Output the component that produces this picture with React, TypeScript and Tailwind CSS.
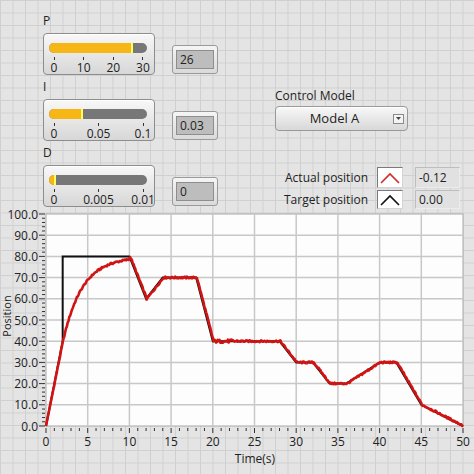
import React from "react";

const X = (t: number) => 46 + t * 8.34;
const Y = (v: number) => 5 + (100 - v) * 2.12;

const targetPts: [number, number][] = [
  [0, 0], [2, 40], [2, 80], [10, 80], [12, 60], [14, 70], [18, 70], [20, 40], [28, 40],
  [30, 30], [32, 30], [34, 20], [36, 20], [40, 30], [42, 30], [45, 10], [50, 0],
];

function target(t: number): number {
  if (t <= 0) return 0;
  for (let i = 1; i < targetPts.length; i++) {
    const [t0, v0] = targetPts[i - 1];
    const [t1, v1] = targetPts[i];
    if (t <= t1 && t1 > t0) return v0 + ((t - t0) / (t1 - t0)) * (v1 - v0);
  }
  return 0;
}

function noise(i: number) {
  const s = Math.sin(i * 12.9898 + 78.233) * 43758.5453;
  return s - Math.floor(s) - 0.5;
}

function buildRed(): string {
  const pts: string[] = [];
  for (let i = 0; i <= 500; i++) {
    const t = i / 10;
    let v: number;
    if (t <= 2) {
      v = 19.6 * t;
    } else if (t <= 10) {
      v = 39.2 + 40.6 * (1 - Math.exp(-(t - 2) / 2.3));
    } else {
      v = target(t - 0.1);
      if (t < 10.2) v = Math.max(v, 79.6);
    }
    const amp = t < 1 ? 0.2 : t > 19.8 && t < 23 ? 1.6 : 0.9;
    v += noise(i) * amp;
    if (t === 50) v = 0.5;
    pts.push(`${X(t).toFixed(2)},${Y(Math.max(v, 0)).toFixed(2)}`);
  }
  return "M" + pts.join(" L");
}

const redPath = buildRed();
const blackPath = "M" + targetPts.map(([t, v]) => `${X(t).toFixed(2)},${Y(v).toFixed(2)}`).join(" L");

function Slider({ frac, labels }: { frac: number; labels: string[] }) {
  return (
    <div className="w-[112px] h-[42px] rounded-[4px] border border-[#8d8d8d] bg-gradient-to-b from-[#f8f8f8] to-[#d7d7d7] shadow-[inset_0_1px_0_#ffffff] pl-[5px] pr-[7px] pt-[9px]">
      <div className="h-[10px] rounded-full bg-[#777777] flex overflow-hidden">
        <div className="h-full bg-[#f6b716]" style={{ width: 5 + frac * 89 }} />
        <div className="h-full w-[2px] bg-[#ffff5a]" />
      </div>
      <div className="flex justify-between ml-[5px] mr-[4px] mt-[4px]">
        {labels.map((l) => (
          <div key={l} className="w-0 flex flex-col items-center">
            <div className="w-px h-[3px] bg-[#333333]" />
            <div className="mt-px text-[12px] leading-[14px] whitespace-nowrap text-[#222222]">{l}</div>
          </div>
        ))}
      </div>
    </div>
  );
}

function ValueBox({ value }: { value: string }) {
  return (
    <div className="w-[46px] h-[29px] rounded-[3px] border border-[#9a9a9a] bg-gradient-to-b from-[#f5f5f5] to-[#dadada] px-[3px] py-[4px] mb-[1px]">
      <div className="h-full bg-[#bdbdbd] border border-[#8e8e8e] flex items-center pl-[3px] text-[12px] text-[#222222]">
        {value}
      </div>
    </div>
  );
}

function Group({ label, frac, labels, value }: { label: string; frac: number; labels: string[]; value: string }) {
  return (
    <div className="flex flex-col">
      <div className="h-[14px] leading-[14px] text-[12px] text-[#222222]">{label}</div>
      <div className="mt-[5px] flex items-end gap-[17px]">
        <Slider frac={frac} labels={labels} />
        <ValueBox value={value} />
      </div>
    </div>
  );
}

function LegendRow({ label, color, value, h }: { label: string; color: string; value: string; h: string }) {
  return (
    <div className={`flex items-center ${h}`}>
      <div className="w-[93px] flex justify-end whitespace-nowrap text-[12px] text-[#222222]">{label}</div>
      <div className="ml-[9px] w-[26px] h-full bg-white border border-[#7a7a7a] border-r-[#d4d4d4] border-b-[#d4d4d4] flex items-center justify-center">
        <svg width="20" height="12" viewBox="0 0 20 12">
          <polyline points="1,11 10,2 19,11" fill="none" stroke={color} strokeWidth="1.6" />
        </svg>
      </div>
      <div className="ml-[12px] w-[45px] h-full bg-[#e1e1e1] border border-[#bdbdbd] border-r-[#ececec] border-b-[#ececec] flex items-center pl-[3px] text-[12px] text-[#222222]">
        {value}
      </div>
    </div>
  );
}

export default function App() {
  const yLabels = [100, 90, 80, 70, 60, 50, 40, 30, 20, 10, 0];
  const xLabels = [0, 5, 10, 15, 20, 25, 30, 35, 40, 45, 50];
  const yTicks = Array.from({ length: 51 }, (_, i) => i * 2);
  const xTicks = Array.from({ length: 51 }, (_, i) => i);
  return (
    <div
      className="w-[474px] h-[474px] overflow-hidden bg-[#e4e4e4] bg-[linear-gradient(to_right,#d0d0d0_1px,transparent_1px),linear-gradient(to_bottom,#d0d0d0_1px,transparent_1px)] bg-[size:12.5px_12.5px] text-[#222222]"
      style={{ fontFamily: '"Open Sans", "Noto Sans", sans-serif' }}
    >
      <div className="flex h-[209px]">
        <div className="w-[275px] pl-[43px] pt-[14px] flex flex-col gap-[5px]">
          <Group label="P" frac={26 / 30} labels={["0", "10", "20", "30"]} value="26" />
          <Group label="I" frac={0.3} labels={["0", "0.05", "0.1"]} value="0.03" />
          <Group label="D" frac={0} labels={["0", "0.005", "0.01"]} value="0" />
        </div>
        <div className="flex-1 pt-[89px] flex flex-col">
          <div className="h-[14px] leading-[14px] text-[12px]">Control Model</div>
          <div className="mt-[3px] w-[133px] h-[30px] rounded-[4px] border border-[#999999] bg-gradient-to-b from-[#f8f8f8] to-[#d8d8d8] shadow-[inset_0_1px_0_#ffffff] flex items-center">
            <div className="flex-1 text-center text-[13px]">Model A</div>
            <div className="mr-[3px] w-[11px] h-[10px] border border-[#8a8a8a] bg-[#f4f4f4] flex items-center justify-center">
              <svg width="5" height="3" viewBox="0 0 5 3">
                <polygon points="0,0 5,0 2.5,3" fill="#444444" />
              </svg>
            </div>
          </div>
          <div className="mt-[36px] flex flex-col gap-[2px]">
            <LegendRow label="Actual position" color="#d42a2a" value="-0.12" h="h-[21px]" />
            <LegendRow label="Target position" color="#111111" value="0.00" h="h-[19px]" />
          </div>
        </div>
      </div>
      <svg width="474" height="265" viewBox="0 0 474 265" className="block overflow-visible">
        <rect x={46} y={5} width={417} height={212} fill="#fdfdfd" stroke="#a8a8a8" strokeWidth="1" />
        {xLabels.slice(1, -1).map((t) => (
          <line key={"gx" + t} x1={X(t)} x2={X(t)} y1={5} y2={217} stroke="#c8c8c8" strokeWidth="1.5" />
        ))}
        {yLabels.slice(1, -1).map((v) => (
          <line key={"gy" + v} x1={46} x2={463} y1={Y(v)} y2={Y(v)} stroke="#c8c8c8" strokeWidth="1.5" />
        ))}
        {yTicks.map((v) => (
          <line key={"ty" + v} x1={v % 10 === 0 ? 39 : 42} x2={45} y1={Y(v)} y2={Y(v)} stroke="#333333" strokeWidth="1" />
        ))}
        {xTicks.map((t) => (
          <line key={"tx" + t} x1={X(t)} x2={X(t)} y1={219} y2={t % 5 === 0 ? 224 : 222} stroke="#333333" strokeWidth="1" />
        ))}
        {yLabels.map((v) => (
          <text key={"ly" + v} x={38} y={Y(v)} textAnchor="end" dominantBaseline="central" fontSize="12" fill="#222222">
            {v.toFixed(1)}
          </text>
        ))}
        {xLabels.map((t) => (
          <text key={"lx" + t} x={X(t)} y={232} textAnchor="middle" dominantBaseline="central" fontSize="12" fill="#222222">
            {t}
          </text>
        ))}
        <text x={255} y={249} textAnchor="middle" dominantBaseline="central" fontSize="12" fill="#222222">
          Time(s)
        </text>
        <text x={6} y={107} textAnchor="middle" dominantBaseline="central" fontSize="11" fill="#222222" transform="rotate(-90 6 107)">
          Position
        </text>
        <path d={blackPath} fill="none" stroke="#111111" strokeWidth="2" strokeLinejoin="miter" />
        <path d={redPath} fill="none" stroke="#d01414" strokeWidth="2.6" strokeLinejoin="round" />
      </svg>
    </div>
  );
}
